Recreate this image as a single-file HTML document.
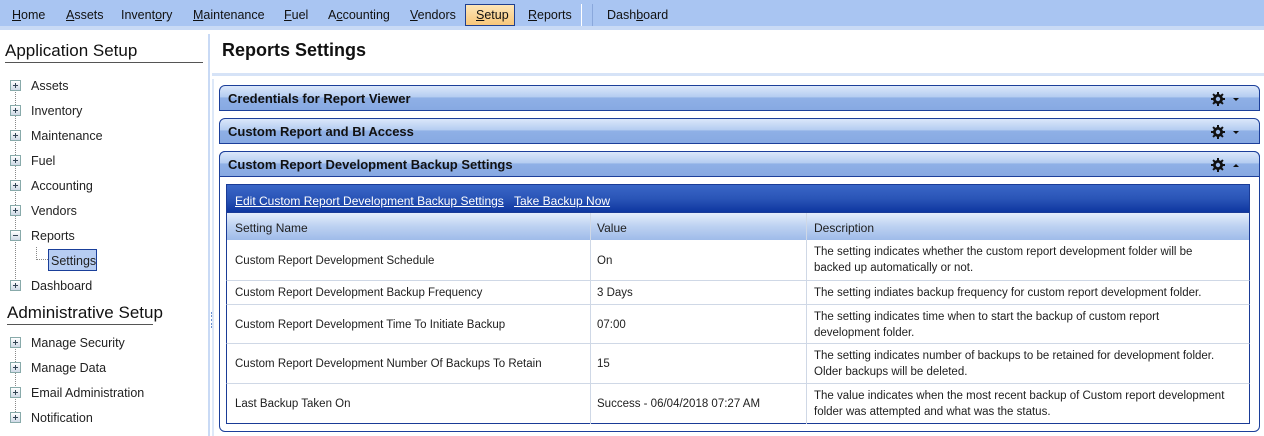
<!DOCTYPE html>
<html><head><style>
*{box-sizing:border-box;margin:0;padding:0}
body{width:1264px;height:436px;overflow:hidden;background:#fff;font-family:"Liberation Sans",sans-serif;font-size:12px;color:#1e1e1e;position:relative}
.a{position:absolute;white-space:nowrap}
#nav{left:0;top:0;width:1264px;height:30px;background:#a9c5f2;border-bottom:4px solid #c9daf5}
#nav span{position:absolute;top:8px;font-size:12.5px;color:#111}
#setup{left:465px;top:4px!important;height:22px;width:50px;background:linear-gradient(#fde6b8,#f8c77a);border:1px solid #1e3f8f}
#left{left:0;top:34px;width:210px;height:402px;border-right:2px solid #c9daf5}
.h{font-size:17px;color:#111;border-bottom:1px solid #555}
.t{font-size:12.5px;color:#222}
.pl{width:11px;height:11px;border:1px solid #8aa;background:linear-gradient(#fff,#cfd9e6)}
.pl:before{content:"";position:absolute;left:2px;top:4px;width:5px;height:1px;background:#345}
.pl.p:after{content:"";position:absolute;left:4px;top:2px;width:1px;height:5px;background:#345}
.dl{border-left:1px dotted #888}
.ph{left:219px;width:1041px;height:26px;border:1px solid #1c3f9a;border-radius:6px 6px 0 0;background:linear-gradient(#dbe7fa 0%,#b5cdf1 45%,#8fb0e6 50%,#87a9e2 100%);font-weight:bold;font-size:13px;padding:5px 8px;color:#111}
.gear{right:14px;top:6px}
.tb{left:226px;top:184px;width:1024px;height:29px;background:linear-gradient(#3a66c7,#2a55b7 50%,#0e36a0);border:1px solid #1a3b96}
.tb span{position:absolute;top:9px;color:#fff;text-decoration:underline}
.gh{left:226px;top:213px;width:1024px;height:27px;background:linear-gradient(#e4edfb,#bcd1f1 50%,#9fbbe9);border-left:1px solid #1a3b96;border-right:1px solid #1a3b96}
.gh span{position:absolute;top:8px}
.row{left:226px;width:1024px;border-left:1px solid #1a3b96;border-right:1px solid #1a3b96;border-bottom:1px solid #cfd8e6}
.row span{position:absolute;font-size:11.5px;line-height:16px}
.vl{width:1px;background:#cfd8e6;top:213px;height:211px}
</style></head><body>
<div id="nav" class="a">
<span style="left:12px"><u>H</u>ome</span>
<span style="left:66px"><u>A</u>ssets</span>
<span style="left:121px">Invent<u>o</u>ry</span>
<span style="left:193px"><u>M</u>aintenance</span>
<span style="left:284px"><u>F</u>uel</span>
<span style="left:328px">A<u>c</u>counting</span>
<span style="left:410px"><u>V</u>endors</span>
<span id="setup" class="a"></span>
<span style="left:476px"><u>S</u>etup</span>
<span style="left:528px"><u>R</u>eports</span>
<span style="left:581px;top:4px;width:1px;height:22px;background:#fff"></span>
<span style="left:592px;top:4px;width:1px;height:22px;background:#8aa8dc"></span>
<span style="left:607px">Dash<u>b</u>oard</span>
</div>
<div id="left" class="a"></div>
<div class="a h" style="left:5px;top:41px;width:198px;height:22px">Application Setup</div>
<div class="a dl" style="left:15px;top:86px;height:199px"></div>
<div class="a dl" style="left:36px;top:247px;height:13px;border-bottom:1px dotted #888;width:12px"></div>
<div class="a t" style="left:31px;top:79px">Assets</div>
<div class="a t" style="left:31px;top:104px">Inventory</div>
<div class="a t" style="left:31px;top:129px">Maintenance</div>
<div class="a t" style="left:31px;top:154px">Fuel</div>
<div class="a t" style="left:31px;top:179px">Accounting</div>
<div class="a t" style="left:31px;top:204px">Vendors</div>
<div class="a t" style="left:31px;top:229px">Reports</div>
<div class="a t" style="left:48px;top:249px;width:49px;height:22px;background:#b7cdf2;border:1px solid #1a3f9a;padding:4px 2px">Settings</div>
<div class="a t" style="left:31px;top:279px">Dashboard</div>
<div class="a h" style="left:7px;top:303px;width:146px;height:22px">Administrative Setup</div>
<div class="a dl" style="left:15px;top:343px;height:75px"></div>
<div class="a t" style="left:31px;top:336px">Manage Security</div>
<div class="a t" style="left:31px;top:361px">Manage Data</div>
<div class="a t" style="left:31px;top:386px">Email Administration</div>
<div class="a t" style="left:31px;top:411px">Notification</div>
<div class="a pl p" style="left:10px;top:80px"></div>
<div class="a pl p" style="left:10px;top:105px"></div>
<div class="a pl p" style="left:10px;top:130px"></div>
<div class="a pl p" style="left:10px;top:155px"></div>
<div class="a pl p" style="left:10px;top:180px"></div>
<div class="a pl p" style="left:10px;top:205px"></div>
<div class="a pl" style="left:10px;top:230px"></div>
<div class="a pl p" style="left:10px;top:280px"></div>
<div class="a pl p" style="left:10px;top:337px"></div>
<div class="a pl p" style="left:10px;top:362px"></div>
<div class="a pl p" style="left:10px;top:387px"></div>
<div class="a pl p" style="left:10px;top:412px"></div>
<div class="a" style="left:211px;top:312px;width:3px;height:16px;border-left:2px dotted #6a8fcf"></div>

<div class="a" style="left:212px;top:34px;width:1052px;height:42px;border-bottom:3px solid #d6e3f7"></div>
<div class="a" style="left:222px;top:40px;font-size:18px;font-weight:bold;color:#111">Reports Settings</div>
<div class="a" style="left:212px;top:79px;width:1052px;height:357px;border-left:2px solid #dde8f8"></div>

<div class="a ph" style="top:85px">Credentials for Report Viewer<svg class="a gear" width="34" height="14" viewBox="0 0 34 14"><g fill="#111"><circle cx="7" cy="7" r="5"/><rect x="6" y="0" width="2" height="14"/><rect x="0" y="6" width="14" height="2"/><rect x="6" y="0" width="2" height="14" transform="rotate(45 7 7)"/><rect x="6" y="0" width="2" height="14" transform="rotate(-45 7 7)"/></g><circle cx="7" cy="7" r="2.2" fill="#9ab8e8"/><path d="M22 6h6l-3 3z" fill="#111"/></svg></div>
<div class="a ph" style="top:118px">Custom Report and BI Access<svg class="a gear" width="34" height="14" viewBox="0 0 34 14"><g fill="#111"><circle cx="7" cy="7" r="5"/><rect x="6" y="0" width="2" height="14"/><rect x="0" y="6" width="14" height="2"/><rect x="6" y="0" width="2" height="14" transform="rotate(45 7 7)"/><rect x="6" y="0" width="2" height="14" transform="rotate(-45 7 7)"/></g><circle cx="7" cy="7" r="2.2" fill="#9ab8e8"/><path d="M22 6h6l-3 3z" fill="#111"/></svg></div>
<div class="a" style="left:219px;top:151px;width:1041px;height:281px;border:1px solid #1c3f9a;border-radius:6px"></div>
<div class="a ph" style="top:151px">Custom Report Development Backup Settings<svg class="a gear" width="34" height="14" viewBox="0 0 34 14"><g fill="#111"><circle cx="7" cy="7" r="5"/><rect x="6" y="0" width="2" height="14"/><rect x="0" y="6" width="14" height="2"/><rect x="6" y="0" width="2" height="14" transform="rotate(45 7 7)"/><rect x="6" y="0" width="2" height="14" transform="rotate(-45 7 7)"/></g><circle cx="7" cy="7" r="2.2" fill="#9ab8e8"/><path d="M22 9h6l-3 -3z" fill="#111"/></svg></div>

<div class="a tb"><span style="left:8px">Edit Custom Report Development Backup Settings</span><span style="left:287px">Take Backup Now</span></div>
<div class="a gh"><span style="left:8px">Setting Name</span><span style="left:370px">Value</span><span style="left:587px">Description</span></div>
<div class="a row" style="top:240px;height:41px"><span style="left:8px;top:13px">Custom Report Development Schedule</span><span style="left:370px;top:13px">On</span><span style="left:587px;top:4px">The setting indicates whether the custom report development folder will be<br>backed up automatically or not.</span></div>
<div class="a row" style="top:281px;height:24px"><span style="left:8px;top:4px">Custom Report Development Backup Frequency</span><span style="left:370px;top:4px">3 Days</span><span style="left:587px;top:4px">The setting indiates backup frequency for custom report development folder.</span></div>
<div class="a row" style="top:305px;height:39px"><span style="left:8px;top:12px">Custom Report Development Time To Initiate Backup</span><span style="left:370px;top:12px">07:00</span><span style="left:587px;top:4px">The setting indicates time when to start the backup of custom report<br>development folder.</span></div>
<div class="a row" style="top:344px;height:40px"><span style="left:8px;top:12px">Custom Report Development Number Of Backups To Retain</span><span style="left:370px;top:12px">15</span><span style="left:587px;top:4px">The setting indicates number of backups to be retained for development folder.<br>Older backups will be deleted.</span></div>
<div class="a row" style="top:384px;height:40px;border-bottom:1px solid #1a3b96"><span style="left:8px;top:12px">Last Backup Taken On</span><span style="left:370px;top:12px">Success - 06/04/2018 07:27 AM</span><span style="left:587px;top:4px">The value indicates when the most recent backup of Custom report development<br>folder was attempted and what was the status.</span></div>
<div class="a vl" style="left:590px"></div>
<div class="a vl" style="left:806px"></div>
</body></html>
